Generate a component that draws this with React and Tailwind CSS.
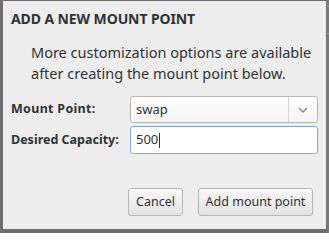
export default function App() {
  return (
    <div className="flex h-[233px] w-[329px] overflow-hidden bg-[#6e6e6e] font-['Noto_Sans','DejaVu_Sans',sans-serif] text-[#2e3436]">
      <div className="mt-px ml-[3px] flex h-[228px] w-[323px] flex-col bg-[#ededed]">
        <h1 className="mt-[8px] pl-[8px] text-[14px] font-bold leading-[20px] tracking-[-0.1px]">ADD A NEW MOUNT POINT</h1>
        <p className="mt-[13px] pl-[28px] text-[14.5px] leading-[21px]">
          More customization options are available
          <br />
          after creating the mount point below.
        </p>
        <div className="mt-[12px] flex flex-col gap-[3px] pl-[8px]">
          <div className="flex items-center">
            <label className="w-[119px] text-[12.5px] font-bold tracking-[0.3px]">Mount Point:</label>
            <div className="flex h-[27px] w-[188px] items-stretch rounded-[3px] border border-[#b6b6b3] bg-gradient-to-b from-white to-[#f4f4f4] shadow-[inset_0_1px_0_white]">
              <span className="flex flex-1 items-center pl-[5px] text-[13px]">swap</span>
              <span className="flex w-[29px] items-center justify-center border-l border-[#d4d4d2]">
                <svg width="10" height="6" viewBox="0 0 10 6" fill="none" stroke="#888a85" strokeWidth="1.4">
                  <path d="M1 1l4 4 4-4" />
                </svg>
              </span>
            </div>
          </div>
          <div className="flex items-center">
            <label className="w-[119px] whitespace-nowrap text-[12.5px] font-bold">Desired Capacity:</label>
            <div className="flex h-[28px] w-[188px] items-center rounded-[3px] border border-[#7fa7d6] bg-white pl-[5px] text-[13px]">
              500<span className="ml-px h-[15px] w-px bg-[#2e3436]" />
            </div>
          </div>
        </div>
        <div className="mt-auto mb-[13px] flex justify-end gap-[15px] pr-[13px]">
          <button className="h-[28px] w-[55px] rounded-[3px] border border-[#b6b6b3] bg-gradient-to-b from-[#f7f7f7] to-[#e4e4e4] text-[12.5px]">Cancel</button>
          <button className="h-[28px] w-[115px] rounded-[3px] border border-[#b6b6b3] bg-gradient-to-b from-[#f7f7f7] to-[#e4e4e4] text-[12.5px]">Add mount point</button>
        </div>
      </div>
      <div className="ml-px flex flex-1 flex-col bg-[#7a7a7a]">
        <div className="mt-[6px] h-px bg-[#9a9a9a]" />
        <div className="mt-[26px] h-px bg-[#9a9a9a]" />
      </div>
    </div>
  )
}
